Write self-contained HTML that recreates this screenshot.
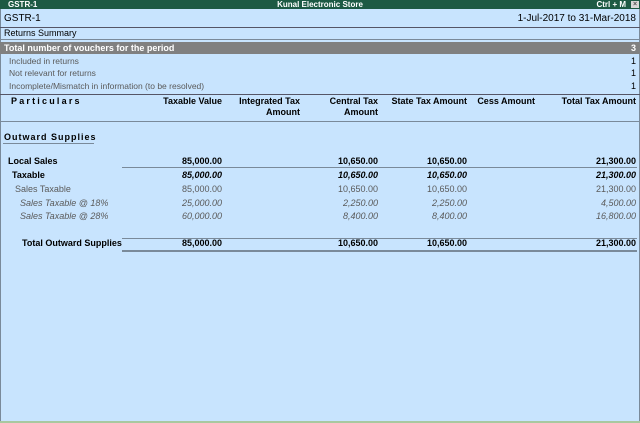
<!DOCTYPE html><html><head><style>
body{margin:0;width:640px;height:423px;background:#c8e4fe;font-family:"Liberation Sans",Arial,sans-serif;font-size:9px;color:#000;position:relative;overflow:hidden}
div{position:absolute;white-space:nowrap}
.r{text-align:right}
.hl{height:1px;background:#7a8a9a}
.b{font-weight:bold}
.g{color:#5a5a5a}
.i{font-style:italic}
</style></head><body>
<div style="left:0;top:0;width:640px;height:9px;background:#1d5a44;color:#fff;font-weight:bold;font-size:8px;line-height:9px">
<span style="position:absolute;left:8px">GSTR-1</span>
<span style="position:absolute;left:0;width:640px;text-align:center">Kunal Electronic Store</span>
<span style="position:absolute;right:14px">Ctrl + M</span>
<span style="position:absolute;right:1px;top:1px;width:8px;height:7px;background:#d8d8d8;color:#555;font-size:7px;line-height:7px;text-align:center">×</span>
</div>
<div style="left:0;top:9px;width:1px;height:414px;background:#7a8a9a"></div>
<div style="right:0;top:9px;width:1px;height:414px;background:#7a8a9a"></div>
<div style="left:4px;top:13px;font-size:10px">GSTR-1</div>
<div class="r" style="right:4px;top:13px;font-size:10px">1-Jul-2017 to 31-Mar-2018</div>
<div class="hl" style="left:0;top:27px;width:640px;height:1px;background:#556"></div>
<div style="left:4px;top:28px">Returns Summary</div>
<div class="hl" style="left:0;top:39px;width:640px"></div>
<div style="left:0;top:42px;width:640px;height:12px;background:#808080;color:#fff;font-weight:bold;line-height:12px"><span style="position:absolute;left:4px">Total number of vouchers for the period</span><span style="position:absolute;right:4px">3</span></div>
<div class="g" style="left:9px;top:56px;font-size:8.5px">Included in returns</div><div class="r" style="right:4px;top:56px">1</div>
<div class="g" style="left:9px;top:68px;font-size:8.5px">Not relevant for returns</div><div class="r" style="right:4px;top:68px">1</div>
<div class="g" style="left:9px;top:81px;font-size:8.5px">Incomplete/Mismatch in information (to be resolved)</div><div class="r" style="right:4px;top:81px">1</div>
<div class="hl" style="left:0;top:94px;width:640px;background:#556"></div>
<div class="b" style="left:11px;top:96px;letter-spacing:2.2px">Particulars</div>
<div class="b r" style="right:418px;top:96px">Taxable Value</div>
<div class="b r" style="right:340px;top:96px;line-height:11px">Integrated Tax<br>Amount</div>
<div class="b r" style="right:262px;top:96px;line-height:11px">Central Tax<br>Amount</div>
<div class="b r" style="right:173px;top:96px">State Tax Amount</div>
<div class="b r" style="right:105px;top:96px">Cess Amount</div>
<div class="b r" style="right:4px;top:96px">Total Tax Amount</div>
<div class="hl" style="left:0;top:121px;width:640px"></div>
<div class="b" style="left:4px;top:132px;letter-spacing:1px">Outward Supplies</div>
<div class="hl" style="left:3px;top:143px;width:91px"></div>
<div class="b" style="left:8px;top:156px">Local Sales</div>
<div class="b r" style="right:418px;top:156px">85,000.00</div>
<div class="b r" style="right:262px;top:156px">10,650.00</div>
<div class="b r" style="right:173px;top:156px">10,650.00</div>
<div class="b r" style="right:4px;top:156px">21,300.00</div>
<div class="hl" style="left:122px;top:167px;width:515px"></div>
<div class="b" style="left:12px;top:170px">Taxable</div>
<div class="b i r" style="right:418px;top:170px">85,000.00</div>
<div class="b i r" style="right:262px;top:170px">10,650.00</div>
<div class="b i r" style="right:173px;top:170px">10,650.00</div>
<div class="b i r" style="right:4px;top:170px">21,300.00</div>
<div class="g" style="left:15px;top:184px">Sales Taxable</div>
<div class="g r" style="right:418px;top:184px">85,000.00</div>
<div class="g r" style="right:262px;top:184px">10,650.00</div>
<div class="g r" style="right:173px;top:184px">10,650.00</div>
<div class="g r" style="right:4px;top:184px">21,300.00</div>
<div class="g i" style="left:20px;top:198px">Sales Taxable @ 18%</div>
<div class="g i r" style="right:418px;top:198px">25,000.00</div>
<div class="g i r" style="right:262px;top:198px">2,250.00</div>
<div class="g i r" style="right:173px;top:198px">2,250.00</div>
<div class="g i r" style="right:4px;top:198px">4,500.00</div>
<div class="g i" style="left:20px;top:211px">Sales Taxable @ 28%</div>
<div class="g i r" style="right:418px;top:211px">60,000.00</div>
<div class="g i r" style="right:262px;top:211px">8,400.00</div>
<div class="g i r" style="right:173px;top:211px">8,400.00</div>
<div class="g i r" style="right:4px;top:211px">16,800.00</div>
<div class="hl" style="left:122px;top:238px;width:515px"></div>
<div class="b" style="left:22px;top:238px">Total Outward Supplies</div>
<div class="b r" style="right:418px;top:238px">85,000.00</div>
<div class="b r" style="right:262px;top:238px">10,650.00</div>
<div class="b r" style="right:173px;top:238px">10,650.00</div>
<div class="b r" style="right:4px;top:238px">21,300.00</div>
<div style="left:122px;top:250px;width:515px;height:2px;background:#7a8a9a"></div>
<div style="left:0;top:421px;width:640px;height:2px;background:#a8c8a0"></div>
</body></html>
